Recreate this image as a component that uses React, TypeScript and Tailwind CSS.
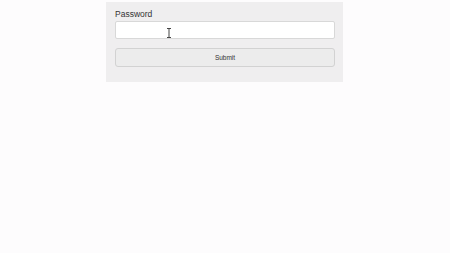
import React from "react";

export default function App() {
  return (
    <div className="w-[450px] h-[253px] bg-[#fdfcfd] pt-[2px] pl-[106px]" style={{ fontFamily: '"Liberation Sans", Arial, sans-serif' }}>
      <div className="w-[237px] h-[80px] bg-[#efeeef] pl-[9px] pr-[8px] pt-[7px] flex flex-col">
        <label className="text-[8.5px] leading-[10px] text-[#333] h-[12px]">Password</label>
        <div className="h-[18px] bg-white border border-[#d8d8d8] rounded-[2px] relative">
          <svg className="absolute left-[50px] top-[6px]" width="6" height="10" viewBox="0 0 6 10">
            <path d="M1 0.5h4M3 0.5v9M1 9.5h4" stroke="#444" strokeWidth="1" fill="none" />
          </svg>
        </div>
        <button className="mt-[9px] h-[19px] bg-[#ececec] border border-[#d2d2d2] rounded-[3px] text-[6.5px] text-[#333] flex items-center justify-center">
          Submit
        </button>
      </div>
    </div>
  );
}
